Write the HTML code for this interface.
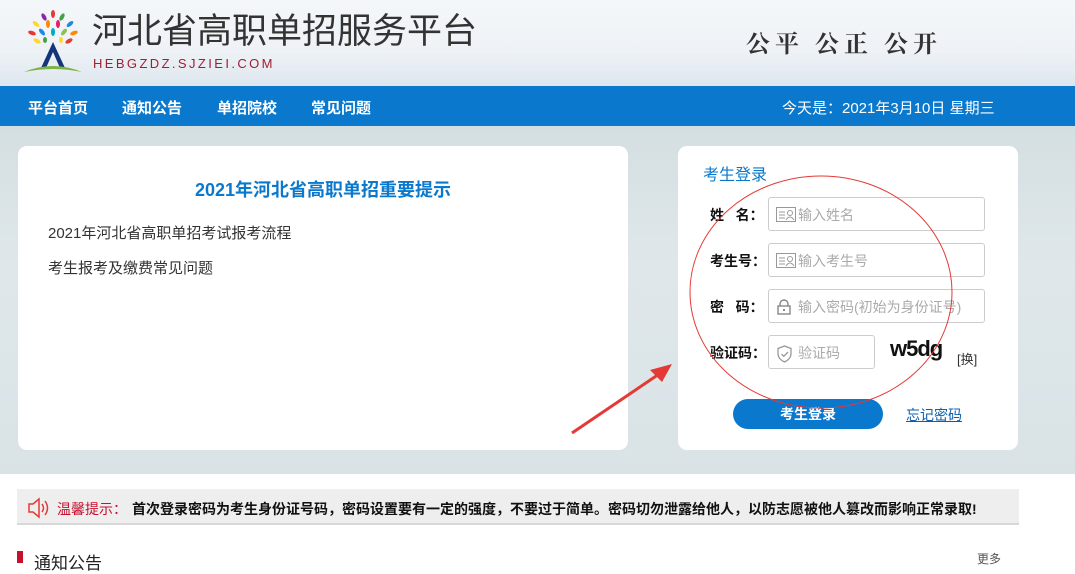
<!DOCTYPE html>
<html><head><meta charset="utf-8"><style>
*{margin:0;padding:0;box-sizing:border-box}
body{width:1075px;height:560px;overflow:hidden;background:#fff;font-family:"Liberation Sans","Noto Sans CJK SC",sans-serif;position:relative}
.hdr{position:absolute;left:0;top:0;width:1075px;height:86px;background:linear-gradient(180deg,#f4f7fa 0%,#eef2f6 60%,#dde6ee 100%)}
.nav{position:absolute;left:0;top:86px;width:1075px;height:40px;background:#0a78cd;color:#fff}
.nav a{position:absolute;top:11px;font-size:15px;font-weight:bold;color:#fff;text-decoration:none}
.bg{position:absolute;left:0;top:126px;width:1075px;height:348px;background:linear-gradient(180deg,#d4dfe2 0%,#dfe7ea 40%,#d9e3e6 100%)}
.card{position:absolute;background:#fff;border-radius:9px}
.lbl{position:absolute;left:710px;font-size:14px;font-weight:bold;color:#111}
.inp{position:absolute;left:768px;width:217px;height:34px;border:1px solid #ccc;border-radius:3px;font-size:14px;color:#aaa;padding:7px 0 0 29px}
.ic{position:absolute;left:7px;top:9px}
</style></head><body>
<div class="hdr">
 <svg style="position:absolute;left:20px;top:8px" width="66" height="66" viewBox="0 0 66 66">
  <g>
   <ellipse cx="33" cy="6" rx="2" ry="4" fill="#e53935"/><ellipse cx="24" cy="9" rx="2" ry="4" fill="#8e24aa" transform="rotate(-30 24 9)"/><ellipse cx="42" cy="9" rx="2" ry="4" fill="#43a047" transform="rotate(30 42 9)"/>
   <ellipse cx="16" cy="16" rx="2" ry="4" fill="#fdd835" transform="rotate(-50 16 16)"/><ellipse cx="50" cy="16" rx="2" ry="4" fill="#1e88e5" transform="rotate(50 50 16)"/>
   <ellipse cx="28" cy="16" rx="2" ry="4" fill="#fb8c00"/><ellipse cx="38" cy="16" rx="2" ry="4" fill="#e91e63"/>
   <ellipse cx="12" cy="25" rx="2" ry="4" fill="#e53935" transform="rotate(-70 12 25)"/><ellipse cx="54" cy="25" rx="2" ry="4" fill="#fb8c00" transform="rotate(70 54 25)"/>
   <ellipse cx="22" cy="24" rx="2" ry="4" fill="#1e88e5" transform="rotate(-40 22 24)"/><ellipse cx="44" cy="24" rx="2" ry="4" fill="#8bc34a" transform="rotate(40 44 24)"/>
   <ellipse cx="33" cy="24" rx="2" ry="4" fill="#00acc1"/><ellipse cx="17" cy="33" rx="2" ry="4" fill="#fdd835" transform="rotate(-60 17 33)"/><ellipse cx="49" cy="33" rx="2" ry="4" fill="#e53935" transform="rotate(60 49 33)"/>
   <ellipse cx="25" cy="32" rx="2" ry="3" fill="#43a047"/><ellipse cx="41" cy="32" rx="2" ry="3" fill="#fdd835"/>
  </g>
  <path d="M33 34 L21 60 L26 60 L33 44 L40 60 L45 60 Z" fill="#13357a"/>
  <path d="M4 64 Q33 52 62 64 Q33 58 4 64Z" fill="#7cb342"/>
 </svg>
 <div style="position:absolute;left:92px;top:11px;font-size:35px;color:#333;line-height:42px;white-space:nowrap">河北省高职单招服务平台</div>
 <div style="position:absolute;left:93px;top:56px;font-size:13px;color:#a02030;letter-spacing:2.4px">HEBGZDZ.SJZIEI.COM</div>
 <div style="position:absolute;left:746px;top:24px;font-size:24px;font-weight:bold;color:#333;font-family:'Noto Serif CJK SC',serif;letter-spacing:5px;white-space:nowrap">公平&nbsp;公正&nbsp;公开</div>
</div>
<div class="nav">
 <a style="left:28px">平台首页</a><a style="left:122px">通知公告</a><a style="left:217px">单招院校</a><a style="left:311px">常见问题</a>
 <div style="position:absolute;left:782px;top:11px;font-size:15px">今天是：2021年3月10日 星期三</div>
</div>
<div class="bg"></div>
<div class="card" style="left:18px;top:146px;width:610px;height:304px">
 <div style="position:absolute;left:0;width:100%;top:30px;text-align:center;font-size:18px;font-weight:bold;color:#0a78cd">2021年河北省高职单招重要提示</div>
 <div style="position:absolute;left:30px;top:76px;font-size:15px;color:#333">2021年河北省高职单招考试报考流程</div>
 <div style="position:absolute;left:30px;top:111px;font-size:15px;color:#333">考生报考及缴费常见问题</div>
</div>
<div class="card" style="left:678px;top:146px;width:340px;height:304px"></div>
<div style="position:absolute;left:703px;top:161px;font-size:16px;color:#0a78cd">考生登录</div>
<div class="lbl" style="top:205px">姓&nbsp;&nbsp;&nbsp;名：</div>
<div class="lbl" style="top:251px">考生号：</div>
<div class="lbl" style="top:297px">密&nbsp;&nbsp;&nbsp;码：</div>
<div class="lbl" style="top:343px">验证码：</div>
<div class="inp" style="top:197px"><svg class="ic" width="20" height="15"><rect x="0.5" y="0.5" width="19" height="14" fill="none" stroke="#999"/><path d="M3 5h6M3 8h6M3 11h6" stroke="#999"/><circle cx="14" cy="6" r="2.5" fill="none" stroke="#999"/><path d="M10 13q4-6 8 0" fill="none" stroke="#999"/></svg>输入姓名</div>
<div class="inp" style="top:243px"><svg class="ic" width="20" height="15"><rect x="0.5" y="0.5" width="19" height="14" fill="none" stroke="#999"/><path d="M3 5h6M3 8h6M3 11h6" stroke="#999"/><circle cx="14" cy="6" r="2.5" fill="none" stroke="#999"/><path d="M10 13q4-6 8 0" fill="none" stroke="#999"/></svg>输入考生号</div>
<div class="inp" style="top:289px"><svg class="ic" width="16" height="16"><path d="M4 7V5a4 4 0 0 1 8 0v2" fill="none" stroke="#888" stroke-width="1.4"/><rect x="2" y="7" width="12" height="8" fill="none" stroke="#888" stroke-width="1.4"/><rect x="7" y="10" width="2" height="2" fill="#888"/></svg>输入密码(初始为身份证号)</div>
<div class="inp" style="top:335px;width:107px"><svg class="ic" width="17" height="18"><path d="M8.5 1L2 3.5v5c0 4 3 7 6.5 8.5C12 15.5 15 12.5 15 8.5v-5z" fill="none" stroke="#999" stroke-width="1.3"/><path d="M5.5 9l2.3 2.3L12 7" fill="none" stroke="#999" stroke-width="1.3"/></svg>验证码</div>
<div style="position:absolute;left:890px;top:336px;font-size:22px;font-weight:bold;color:#111;letter-spacing:-1px">w5dg</div>
<div style="position:absolute;left:957px;top:349px;font-size:13px;color:#333">[换]</div>
<div style="position:absolute;left:733px;top:399px;width:150px;height:30px;border-radius:15px;background:#0a78cd;color:#fff;font-size:14px;font-weight:bold;text-align:center;line-height:30px">考生登录</div>
<div style="position:absolute;left:906px;top:405px;font-size:14px;color:#0a5fb0;text-decoration:underline">忘记密码</div>
<svg style="position:absolute;left:560px;top:160px" width="420" height="280"><ellipse cx="261" cy="132" rx="131" ry="116" fill="none" stroke="#e53935" stroke-width="1"/><path d="M12 273 L105 210" stroke="#e53935" stroke-width="3"/><path d="M112 204 L90 210 L102 222Z" fill="#e53935"/></svg>
<div style="position:absolute;left:17px;top:489px;width:1002px;height:36px;background:#eee;border-bottom:2px solid #d8d8d8"></div>
<svg style="position:absolute;left:27px;top:497px" width="24" height="22"><path d="M2 7h4l6-5v18l-6-5H2z" fill="none" stroke="#e53935" stroke-width="1.5"/><path d="M15 7q3 4 0 8M18 4q5 7 0 14" fill="none" stroke="#e53935" stroke-width="1.5"/></svg>
<div style="position:absolute;left:57px;top:499px;font-size:14px;color:#c8102e">温馨提示：</div>
<div style="position:absolute;left:132px;top:499px;font-size:14px;font-weight:bold;color:#111;white-space:nowrap;letter-spacing:0px">首次登录密码为考生身份证号码，密码设置要有一定的强度，不要过于简单。密码切勿泄露给他人，以防志愿被他人篡改而影响正常录取!</div>
<div style="position:absolute;left:17px;top:551px;width:6px;height:12px;background:#c8102e"></div>
<div style="position:absolute;left:34px;top:549px;font-size:17px;color:#222">通知公告</div>
<div style="position:absolute;left:977px;top:550px;font-size:12px;color:#555">更多</div>
</body></html>
